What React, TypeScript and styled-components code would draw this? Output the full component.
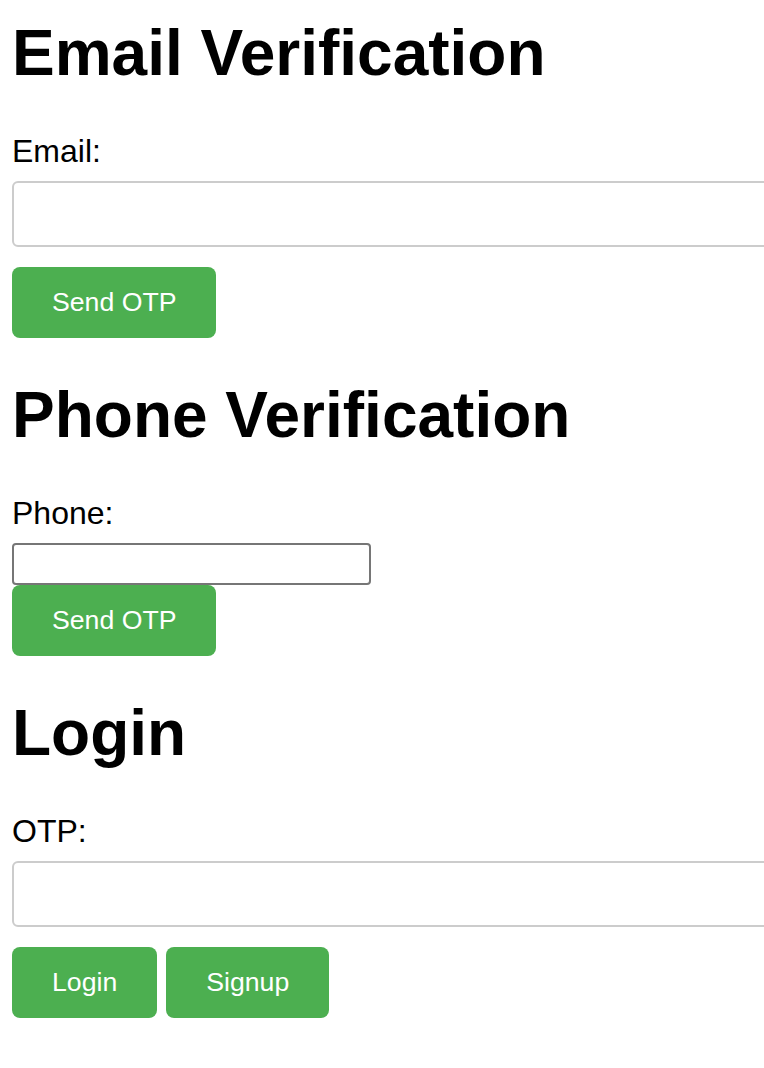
import React from 'react';
import styled, { createGlobalStyle } from 'styled-components';

const GlobalStyle = createGlobalStyle`
  html,
  body {
    margin: 0;
    padding: 0;
    background: #fff;
    overflow-x: hidden;
  }
  body {
    font-family: 'Liberation Sans', Arial, sans-serif;
    color: #000;
  }
`;

const Page = styled.div`
  padding: 16px 0 40px 12px;
`;

const Section = styled.section`
  display: flex;
  flex-direction: column;
  align-items: flex-start;
  & + & {
    margin-top: 40px;
  }
`;

const Title = styled.h1`
  margin: 0 0 42px;
  font-size: 64px;
  line-height: 74px;
  font-weight: 700;
`;

const Label = styled.label`
  display: block;
  margin-bottom: 11px;
  padding-top: 1px;
  font-size: 32px;
  line-height: 37px;
`;

const TextInput = styled.input`
  box-sizing: content-box;
  width: 100%;
  height: 62px;
  padding: 0 24px;
  margin: 0 0 20px;
  border: 2px solid #ccc;
  border-radius: 6px;
  background: #fff;
  font-size: 28px;
  font-family: inherit;
  outline: 0;
`;

const PlainInput = styled.input`
  box-sizing: border-box;
  width: 359px;
  height: 42px;
  margin: 0;
  padding: 2px 4px;
  border: 2px solid #767676;
  border-radius: 4px;
  background: #fff;
  font-size: 26px;
  font-family: inherit;
  outline: 0;
`;

const ButtonRow = styled.div`
  display: flex;
  gap: 9px;
`;

const Button = styled.button`
  padding: 20px 40px;
  border: none;
  border-radius: 8px;
  background: #4caf50;
  color: #fff;
  font-family: 'Liberation Sans', Arial, sans-serif;
  font-size: 26.67px;
  line-height: 31px;
  cursor: pointer;
`;

export default function App() {
  return (
    <Page>
      <GlobalStyle />
      <Section>
        <Title>Email Verification</Title>
        <Label htmlFor='email'>Email:</Label>
        <TextInput id='email' type='email' />
        <Button type='button'>Send OTP</Button>
      </Section>

      <Section>
        <Title>Phone Verification</Title>
        <Label htmlFor='phone'>Phone:</Label>
        <PlainInput id='phone' type='tel' />
        <Button type='button'>Send OTP</Button>
      </Section>

      <Section>
        <Title>Login</Title>
        <Label htmlFor='otp'>OTP:</Label>
        <TextInput id='otp' type='text' />
        <ButtonRow>
          <Button type='button'>Login</Button>
          <Button type='button'>Signup</Button>
        </ButtonRow>
      </Section>
    </Page>
  );
}
